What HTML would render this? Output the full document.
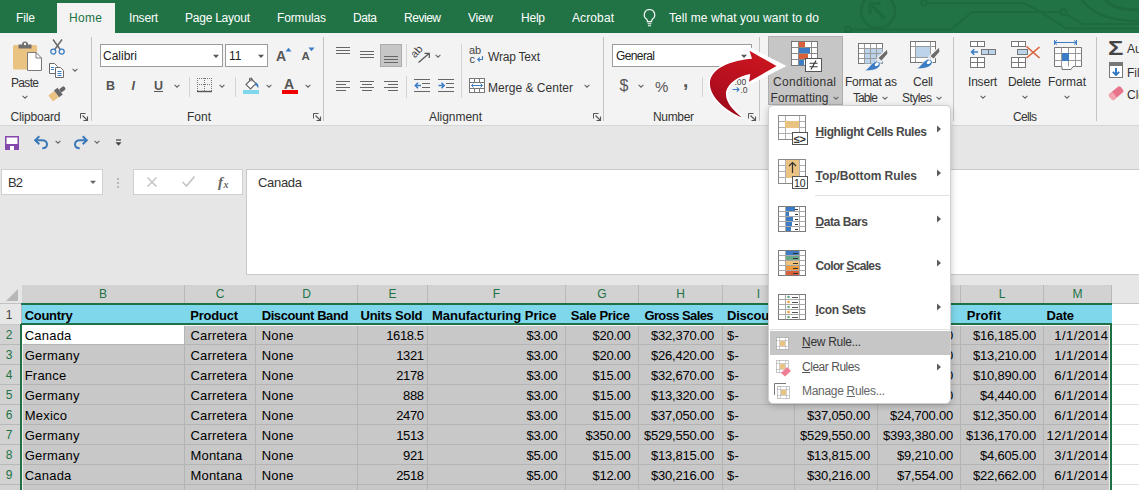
<!DOCTYPE html>
<html lang="en"><head><meta charset="utf-8"><title>Excel Conditional Formatting</title>
<style>
html,body{margin:0;padding:0}
body{width:1139px;height:490px;overflow:hidden;position:relative;background:#e6e6e6;font-family:"Liberation Sans",sans-serif;}
.t{position:absolute;white-space:pre;line-height:1;display:block}
.b{position:absolute;box-sizing:border-box;display:block}
.c{position:absolute;box-sizing:border-box;white-space:pre;overflow:hidden;font-size:13px;line-height:19px;height:19px;color:#000;letter-spacing:.22px}
.r{text-align:right}
.h{font-weight:bold;letter-spacing:0}
</style></head>
<body>
<!-- tab bar -->
<div class="b" style="left:0px;top:0px;width:1139px;height:33px;background:#217346;"></div>
<div class="b" style="left:57px;top:3px;width:58px;height:31px;background:#f3f3f3;"></div>
<span class="t" style="left:16.0px;top:11.8px;font-size:12px;color:#fff;letter-spacing:-0.11px;">File</span>
<span class="t" style="left:69.0px;top:11.8px;font-size:12px;color:#217346;letter-spacing:0.33px;">Home</span>
<span class="t" style="left:129.0px;top:11.8px;font-size:12px;color:#fff;letter-spacing:-0.20px;">Insert</span>
<span class="t" style="left:185.0px;top:11.8px;font-size:12px;color:#fff;letter-spacing:-0.24px;">Page Layout</span>
<span class="t" style="left:277.0px;top:11.8px;font-size:12px;color:#fff;letter-spacing:-0.14px;">Formulas</span>
<span class="t" style="left:353.0px;top:11.8px;font-size:12px;color:#fff;letter-spacing:-0.45px;">Data</span>
<span class="t" style="left:404.0px;top:11.8px;font-size:12px;color:#fff;letter-spacing:-0.47px;">Review</span>
<span class="t" style="left:468.0px;top:11.8px;font-size:12px;color:#fff;letter-spacing:-0.26px;">View</span>
<span class="t" style="left:521.0px;top:11.8px;font-size:12px;color:#fff;letter-spacing:-0.23px;">Help</span>
<span class="t" style="left:572.0px;top:11.8px;font-size:12px;color:#fff;letter-spacing:0.11px;">Acrobat</span>
<span class="t" style="left:669.0px;top:11.8px;font-size:12px;color:#fff;letter-spacing:0.07px;">Tell me what you want to do</span>
<svg class="b" style="left:641px;top:8px;" width="17" height="20" viewBox="0 0 17 20"><path d="M8.5 1.5a5.3 5.3 0 0 0-3 9.6c.6.5.9 1.2.9 2v.6h4.2v-.6c0-.8.3-1.5.9-2a5.3 5.3 0 0 0-3-9.6z" fill="none" stroke="#fff" stroke-width="1.2"/><path d="M6.6 15.8h3.8M7 17.8h3" stroke="#fff" stroke-width="1.1"/></svg>
<svg class="b" style="left:820px;top:0px;" width="319" height="33" viewBox="0 0 319 33"><g fill="none" stroke="#1d6a3f" stroke-width="2.2" stroke-linecap="round"><circle cx="58" cy="11" r="17" stroke-width="2.600"/><path d="M50 3.500 L64 18 M50 3.500 v9.500 M50 3.500 h9.500" stroke-width="3.200"/><circle cx="104" cy="3" r="2.800"/><path d="M107 3 H204 L221 12"/><circle cx="28" cy="29.500" r="2.800"/><path d="M31 29.500 H131 L152 12 H240"/><circle cx="243.500" cy="12" r="2.800"/><path d="M221 12 L246 28.500 H319"/><path d="M246 14 L262 24 H319" /><path d="M262 0 C 272 14 292 21 319 21" stroke-width="2.600"/><path d="M286 0 C 292 7 304 10 319 10" stroke-width="3"/></g></svg>
<!-- ribbon -->
<div class="b" style="left:0px;top:33px;width:1139px;height:92px;background:#f3f3f3;"></div>
<div class="b" style="left:0px;top:125px;width:1139px;height:1px;background:#d6d6d6;"></div>
<div class="b" style="left:91px;top:37px;width:1px;height:84px;background:#c4c4c4;"></div>
<div class="b" style="left:323px;top:37px;width:1px;height:84px;background:#c4c4c4;"></div>
<div class="b" style="left:603px;top:37px;width:1px;height:84px;background:#c4c4c4;"></div>
<div class="b" style="left:759px;top:37px;width:1px;height:84px;background:#c4c4c4;"></div>
<div class="b" style="left:953px;top:37px;width:1px;height:84px;background:#c4c4c4;"></div>
<div class="b" style="left:1096px;top:37px;width:1px;height:84px;background:#c4c4c4;"></div>
<span class="t" style="left:10.5px;top:110.8px;font-size:12px;color:#333;letter-spacing:-0.17px;">Clipboard</span>
<span class="t" style="left:187.0px;top:110.8px;font-size:12px;color:#333;">Font</span>
<span class="t" style="left:429.0px;top:110.8px;font-size:12px;color:#333;letter-spacing:-0.05px;">Alignment</span>
<span class="t" style="left:653.0px;top:110.8px;font-size:12px;color:#333;letter-spacing:-0.34px;">Number</span>
<span class="t" style="left:1013.0px;top:110.8px;font-size:12px;color:#333;letter-spacing:-0.67px;">Cells</span>
<svg class="b" style="left:80px;top:113px;" width="9" height="9" viewBox="0 0 9 9"><path d="M0.500 5.500 V0.500 H5.500" fill="none" stroke="#555" stroke-width="1"/><path d="M2.500 2.500 L7 7 M7.500 3.500 V7.500 H3.500" fill="none" stroke="#555" stroke-width="1.100"/></svg>
<svg class="b" style="left:313px;top:113px;" width="9" height="9" viewBox="0 0 9 9"><path d="M0.500 5.500 V0.500 H5.500" fill="none" stroke="#555" stroke-width="1"/><path d="M2.500 2.500 L7 7 M7.500 3.500 V7.500 H3.500" fill="none" stroke="#555" stroke-width="1.100"/></svg>
<svg class="b" style="left:593px;top:113px;" width="9" height="9" viewBox="0 0 9 9"><path d="M0.500 5.500 V0.500 H5.500" fill="none" stroke="#555" stroke-width="1"/><path d="M2.500 2.500 L7 7 M7.500 3.500 V7.500 H3.500" fill="none" stroke="#555" stroke-width="1.100"/></svg>
<svg class="b" style="left:748px;top:113px;" width="9" height="9" viewBox="0 0 9 9"><path d="M0.500 5.500 V0.500 H5.500" fill="none" stroke="#555" stroke-width="1"/><path d="M2.500 2.500 L7 7 M7.500 3.500 V7.500 H3.500" fill="none" stroke="#555" stroke-width="1.100"/></svg>
<svg class="b" style="left:12px;top:40px;" width="31" height="32" viewBox="0 0 31 32"><rect x="1" y="5" width="24" height="24.500" rx="1.5" fill="#eac282"/><path d="M6.500 8.500 V4.500 H10 a3 3 0 0 1 6 0 H19.500 V8.500 Z" fill="#6e6e6e"/><circle cx="13" cy="4" r="1.200" fill="#f3f3f3"/><path d="M15.500 12.500 H24 L29.500 18 V30.500 H15.500 Z" fill="#fff" stroke="#7a7a7a" stroke-width="1"/><path d="M24 12.500 V18 H29.500" fill="none" stroke="#7a7a7a" stroke-width="1"/></svg>
<span class="t" style="left:11.0px;top:76.5px;font-size:12px;color:#333;letter-spacing:-0.67px;">Paste</span>
<svg class="b" style="left:21px;top:94px;" width="8" height="6" viewBox="0 0 8 6"><path d="M1.6 1.8 L4 4.2 L6.4 1.8" fill="none" stroke="#666" stroke-width="1.1"/></svg>
<svg class="b" style="left:49px;top:38px;" width="17" height="18" viewBox="0 0 17 18"><path d="M4 1.5 L11.6 12 M13 1.5 L5.4 12" stroke="#666" stroke-width="1.4" fill="none"/><circle cx="4.3" cy="13.6" r="2.5" fill="none" stroke="#3b7cc4" stroke-width="1.3"/><circle cx="12.7" cy="13.6" r="2.5" fill="none" stroke="#3b7cc4" stroke-width="1.3"/></svg>
<svg class="b" style="left:48px;top:62px;" width="18" height="17" viewBox="0 0 18 17"><path d="M1.5 1.5 H6.5 L9.5 4.5 V11.5 H1.5 Z" fill="#fff" stroke="#6a6a6a"/><path d="M7.5 5.5 H12.5 L15.5 8.5 V15.5 H7.5 Z" fill="#fff" stroke="#6a6a6a"/><path d="M3 5.5h3M3 7.5h3M9.5 9.5h4M9.5 11.5h4M9.5 13.5h4" stroke="#3b7cc4" stroke-width="1"/></svg>
<svg class="b" style="left:71px;top:67px;" width="8" height="6" viewBox="0 0 8 6"><path d="M1.6 1.8 L4 4.2 L6.4 1.8" fill="none" stroke="#666" stroke-width="1.1"/></svg>
<svg class="b" style="left:48px;top:83px;" width="20" height="19" viewBox="0 0 20 19"><g transform="rotate(-38 10 9.500)"><rect x="0.500" y="6" width="7.500" height="7.500" fill="#eac282"/><rect x="8" y="5.500" width="4.500" height="8.500" fill="#666"/><rect x="12.500" y="7.700" width="6" height="4" rx="1.500" fill="#666"/></g></svg>
<div class="b" style="left:100px;top:44px;width:123px;height:23px;background:#fff;border:1px solid #9c9c9c;"></div><span class="t" style="left:103.0px;top:49.8px;font-size:12px;color:#222;">Calibri</span><svg class="b" style="left:211.5px;top:54px;" width="8" height="5" viewBox="0 0 8 5"><path d="M1 0.8 H7 L4 4 Z" fill="#555"/></svg>
<div class="b" style="left:225px;top:44px;width:43px;height:23px;background:#fff;border:1px solid #9c9c9c;"></div><span class="t" style="left:229.0px;top:49.8px;font-size:12px;color:#222;">11</span><svg class="b" style="left:256.5px;top:54px;" width="8" height="5" viewBox="0 0 8 5"><path d="M1 0.8 H7 L4 4 Z" fill="#555"/></svg>
<span class="t" style="left:276.0px;top:49.1px;font-size:14px;color:#555;font-weight:bold;">A</span>
<svg class="b" style="left:285px;top:47px;" width="8" height="5" viewBox="0 0 8 5"><path d="M0.5 4.5 H6.5 L3.5 0.8 Z" fill="#3b7cc4"/></svg>
<span class="t" style="left:301.5px;top:51.3px;font-size:11.5px;color:#555;font-weight:bold;">A</span>
<svg class="b" style="left:308px;top:47px;" width="8" height="5" viewBox="0 0 8 5"><path d="M0.5 0.5 H6.5 L3.5 4.2 Z" fill="#3b7cc4"/></svg>
<span class="t" style="left:106.0px;top:80.1px;font-size:12.5px;color:#555;font-weight:bold;">B</span>
<span class="t" style="left:131.5px;top:80.1px;font-size:12.5px;color:#555;font-style:italic;font-weight:bold;">I</span>
<span class="t" style="left:154.0px;top:80.1px;font-size:12.5px;color:#555;font-weight:bold;">U</span>
<div class="b" style="left:154px;top:91px;width:9px;height:1px;background:#555;"></div>
<svg class="b" style="left:173px;top:83px;" width="8" height="6" viewBox="0 0 8 6"><path d="M1.6 1.8 L4 4.2 L6.4 1.8" fill="none" stroke="#666" stroke-width="1.1"/></svg>
<div class="b" style="left:189px;top:77px;width:1px;height:20px;background:#d4d4d4;"></div>
<svg class="b" style="left:197px;top:78px;" width="15" height="15" viewBox="0 0 15 15"><g stroke="#777" stroke-width="1" stroke-dasharray="1 1" fill="none"><path d="M0 0.500 H15 M0 6.500 H15 M0.500 0 V13 M7.500 0 V13 M14.500 0 V13"/></g><path d="M0 13.500 H15" stroke="#555" stroke-width="1.400"/></svg>
<svg class="b" style="left:218px;top:83px;" width="8" height="6" viewBox="0 0 8 6"><path d="M1.6 1.8 L4 4.2 L6.4 1.8" fill="none" stroke="#666" stroke-width="1.1"/></svg>
<div class="b" style="left:235px;top:77px;width:1px;height:20px;background:#d4d4d4;"></div>
<svg class="b" style="left:242px;top:77px;" width="19" height="18" viewBox="0 0 19 18"><rect x="1" y="13" width="16" height="4" fill="#7fd7ec"/><path d="M4 7.5 L9.5 2 L14 6.5 L8.5 12 Z" fill="#fff" stroke="#666" stroke-width="1.1"/><path d="M7.5 4 V1.2 H10 V4.5" fill="none" stroke="#666" stroke-width="1"/><path d="M14.2 5.5 C16.5 7 17 9.5 16 11.5 C15.5 9.5 14.5 8.3 12.8 8 Z" fill="#3b7cc4"/></svg>
<svg class="b" style="left:265px;top:83px;" width="8" height="6" viewBox="0 0 8 6"><path d="M1.6 1.8 L4 4.2 L6.4 1.8" fill="none" stroke="#666" stroke-width="1.1"/></svg>
<span class="t" style="left:284.0px;top:77.3px;font-size:14px;color:#555;font-weight:bold;">A</span>
<div class="b" style="left:282px;top:90px;width:16px;height:4px;background:#f00000;"></div>
<svg class="b" style="left:304px;top:83px;" width="8" height="6" viewBox="0 0 8 6"><path d="M1.6 1.8 L4 4.2 L6.4 1.8" fill="none" stroke="#666" stroke-width="1.1"/></svg>
<div class="b" style="left:336px;top:47px;width:14px;height:1px;background:#666;"></div><div class="b" style="left:336px;top:50px;width:14px;height:1px;background:#666;"></div><div class="b" style="left:336px;top:53px;width:14px;height:1px;background:#666;"></div>
<div class="b" style="left:360px;top:51px;width:14px;height:1px;background:#666;"></div><div class="b" style="left:360px;top:54px;width:14px;height:1px;background:#666;"></div><div class="b" style="left:360px;top:57px;width:14px;height:1px;background:#666;"></div>
<div class="b" style="left:380px;top:44px;width:22px;height:23px;background:#c6c6c6;border:1px solid #ababab;"></div>
<div class="b" style="left:384px;top:56px;width:14px;height:1px;background:#666;"></div><div class="b" style="left:384px;top:59px;width:14px;height:1px;background:#666;"></div><div class="b" style="left:384px;top:62px;width:14px;height:1px;background:#666;"></div>
<div class="b" style="left:336px;top:81px;width:14px;height:1px;background:#666;"></div><div class="b" style="left:336px;top:84px;width:10px;height:1px;background:#666;"></div><div class="b" style="left:336px;top:87px;width:14px;height:1px;background:#666;"></div><div class="b" style="left:336px;top:90px;width:10px;height:1px;background:#666;"></div>
<div class="b" style="left:360.0px;top:81px;width:14px;height:1px;background:#666;"></div><div class="b" style="left:362.0px;top:84px;width:10px;height:1px;background:#666;"></div><div class="b" style="left:360.0px;top:87px;width:14px;height:1px;background:#666;"></div><div class="b" style="left:362.0px;top:90px;width:10px;height:1px;background:#666;"></div>
<div class="b" style="left:384px;top:81px;width:14px;height:1px;background:#666;"></div><div class="b" style="left:388px;top:84px;width:10px;height:1px;background:#666;"></div><div class="b" style="left:384px;top:87px;width:14px;height:1px;background:#666;"></div><div class="b" style="left:388px;top:90px;width:10px;height:1px;background:#666;"></div>
<div class="b" style="left:406px;top:44px;width:1px;height:23px;background:#d4d4d4;"></div>
<div class="b" style="left:406px;top:76px;width:1px;height:22px;background:#d4d4d4;"></div>
<div class="b" style="left:461px;top:44px;width:1px;height:54px;background:#d4d4d4;"></div>
<svg class="b" style="left:412px;top:44px;" width="21" height="21" viewBox="0 0 21 21"><text x="0" y="0" font-size="11" fill="#444" font-family="Liberation Sans" transform="translate(3.500 9.500) rotate(-48) translate(-4 3)">ab</text><path d="M6.500 18.500 L17 9.500 M17.300 14 V9.300 H12.500" fill="none" stroke="#555" stroke-width="1.200"/></svg>
<svg class="b" style="left:434px;top:53px;" width="8" height="6" viewBox="0 0 8 6"><path d="M1.6 1.8 L4 4.2 L6.4 1.8" fill="none" stroke="#666" stroke-width="1.1"/></svg>
<svg class="b" style="left:414px;top:78px;" width="17" height="15" viewBox="0 0 17 15"><path d="M0 1.5h16M8 5.5h8M8 9.5h8M0 13.5h16" stroke="#666" stroke-width="1"/><path d="M7 7.5 H1.5 M4 4.8 L1.3 7.5 L4 10.2" stroke="#3b7cc4" stroke-width="1.5" fill="none"/></svg>
<svg class="b" style="left:438px;top:78px;" width="17" height="15" viewBox="0 0 17 15"><path d="M0 1.5h16M8 5.5h8M8 9.5h8M0 13.5h16" stroke="#666" stroke-width="1"/><path d="M0.5 7.5 H6 M3.5 4.8 L6.2 7.5 L3.5 10.2" stroke="#3b7cc4" stroke-width="1.5" fill="none"/></svg>
<svg class="b" style="left:469px;top:45px;" width="17" height="19" viewBox="0 0 17 19"><text x="0" y="9" font-size="11" fill="#444" font-family="Liberation Sans">ab</text><text x="0.500" y="17.500" font-size="11" fill="#444" font-family="Liberation Sans">c</text><path d="M13.500 11 V14.500 H9 M10.800 12.500 L8.800 14.500 L10.800 16.500" stroke="#3b7cc4" stroke-width="1.100" fill="none"/></svg>
<span class="t" style="left:488.0px;top:50.5px;font-size:12px;color:#333;letter-spacing:-0.20px;">Wrap Text</span>
<svg class="b" style="left:469px;top:78px;" width="16" height="16" viewBox="0 0 16 16"><rect x="0.500" y="0.500" width="15" height="14" fill="#fff" stroke="#777"/><path d="M0.500 4.500h15M0.500 10.500h15M5.500 0.500v4M10.500 0.500v4M5.500 10.500v4M10.500 10.500v4" stroke="#777"/><path d="M2.500 7.500 H13.500 M4.500 5.500 L2.500 7.500 L4.500 9.500 M11.500 5.500 L13.500 7.500 L11.500 9.500" stroke="#3b7cc4" fill="none" stroke-width="1"/></svg>
<span class="t" style="left:488.0px;top:81.5px;font-size:12px;color:#333;letter-spacing:0.02px;">Merge &amp; Center</span>
<svg class="b" style="left:583px;top:83px;" width="8" height="6" viewBox="0 0 8 6"><path d="M1.6 1.8 L4 4.2 L6.4 1.8" fill="none" stroke="#666" stroke-width="1.1"/></svg>
<div class="b" style="left:612px;top:44px;width:140px;height:23px;background:#fff;border:1px solid #9c9c9c;"></div>
<span class="t" style="left:616.0px;top:49.8px;font-size:12px;color:#222;letter-spacing:-0.62px;">General</span>
<svg class="b" style="left:740px;top:54px;" width="8" height="5" viewBox="0 0 8 5"><path d="M1 0.8 H7 L4 4 Z" fill="#555"/></svg>
<span class="t" style="left:619.5px;top:77.7px;font-size:16px;color:#555;">$</span>
<svg class="b" style="left:637px;top:83px;" width="8" height="6" viewBox="0 0 8 6"><path d="M1.6 1.8 L4 4.2 L6.4 1.8" fill="none" stroke="#666" stroke-width="1.1"/></svg>
<span class="t" style="left:655.0px;top:79.0px;font-size:15px;color:#555;">%</span>
<span class="t" style="left:683.0px;top:70.6px;font-size:19px;color:#555;font-weight:bold;">,</span>
<div class="b" style="left:702px;top:77px;width:1px;height:20px;background:#d4d4d4;"></div>
<svg class="b" style="left:732px;top:77px;" width="18" height="18" viewBox="0 0 18 18"><text x="2.500" y="7.500" font-size="8.500" fill="#444" font-family="Liberation Sans">.00</text><text x="8.500" y="16" font-size="8.500" fill="#444" font-family="Liberation Sans">.0</text><path d="M0.5 12.5 H7 M4.8 10.3 L7 12.5 L4.8 14.7" stroke="#3b7cc4" fill="none" stroke-width="1.1"/></svg>
<div class="b" style="left:768px;top:36px;width:75px;height:69px;background:#c6c6c6;border:1px solid #aeaeae;"></div>
<svg class="b" style="left:790px;top:40px;" width="34" height="34" viewBox="0 0 34 34"><rect x="1.5" y="1.5" width="26" height="24" fill="#fff" stroke="#777"/><path d="M1.5 7.5h26M1.5 13.5h26M1.5 19.5h26M8.5 1.5v24M21.5 1.5v24" stroke="#8a8a8a"/><rect x="9" y="2" width="6" height="5" fill="#d9603b"/><rect x="9" y="8" width="11" height="5" fill="#3b7cc4"/><rect x="9" y="14" width="9" height="5" fill="#d9603b"/><rect x="9" y="20" width="5" height="5" fill="#3b7cc4"/><rect x="15.5" y="18.5" width="16" height="13" fill="#fff" stroke="#555"/><path d="M19.5 23.2h8M19.5 26.8h8M26 20.5 L21 29.5" stroke="#333" stroke-width="1.1"/></svg>
<span class="t" style="left:773.0px;top:75.5px;font-size:12px;color:#333;letter-spacing:0.30px;">Conditional</span>
<span class="t" style="left:770.5px;top:91.5px;font-size:12px;color:#333;letter-spacing:0.07px;">Formatting</span>
<svg class="b" style="left:832px;top:94.5px;" width="8" height="6" viewBox="0 0 8 6"><path d="M1.6 1.8 L4 4.2 L6.4 1.8" fill="none" stroke="#666" stroke-width="1.1"/></svg>
<svg class="b" style="left:857px;top:41px;" width="33" height="31" viewBox="0 0 33 31"><rect x="1.500" y="2.500" width="24" height="20" fill="#fff" stroke="#777"/><rect x="7.500" y="7.500" width="18" height="15" fill="#bcd3ec"/><path d="M2 7.500h23M2 12.500h23M2 17.500h23M7.500 3v19M13.500 3v19M19.500 3v19" stroke="#9a9a9a"/><g transform="translate(0 0)"><path d="M30.500 7.500 L31 13 L24.500 20.500 L20.500 17 Z" fill="#6a6a6a" stroke="#f3f3f3" stroke-width="1.200"/><path d="M19.300 18.200 L23.200 21.700" stroke="#f3f3f3" stroke-width="1.400"/><path d="M7 29.800 C12 28 13.500 22 18.500 20.300 C22.500 19.300 24.500 22.800 22.300 25.800 C19.500 29.300 13 30 7 29.800 Z" fill="#3b7cc4" stroke="#f3f3f3" stroke-width="0.800"/><ellipse cx="19.800" cy="23.200" rx="2.300" ry="1.500" fill="#fff" transform="rotate(-35 19.800 23.200)"/></g></svg>
<span class="t" style="left:845.0px;top:75.5px;font-size:12px;color:#333;letter-spacing:-0.25px;">Format as</span>
<span class="t" style="left:853.0px;top:91.5px;font-size:12px;color:#333;letter-spacing:-0.92px;">Table</span>
<svg class="b" style="left:881px;top:95px;" width="8" height="6" viewBox="0 0 8 6"><path d="M1.6 1.8 L4 4.2 L6.4 1.8" fill="none" stroke="#666" stroke-width="1.1"/></svg>
<svg class="b" style="left:909px;top:41px;" width="33" height="31" viewBox="0 0 33 31"><rect x="1.500" y="0.500" width="25" height="21" fill="#fff" stroke="#777"/><path d="M2 5.500h24M2 16.500h24M6.500 1v20M21.500 1v20" stroke="#9a9a9a"/><rect x="7" y="6" width="14" height="10" fill="#bcd3ec"/><g transform="translate(0 -2)"><path d="M30.500 7.500 L31 13 L24.500 20.500 L20.500 17 Z" fill="#6a6a6a" stroke="#f3f3f3" stroke-width="1.200"/><path d="M19.300 18.200 L23.200 21.700" stroke="#f3f3f3" stroke-width="1.400"/><path d="M7 29.800 C12 28 13.500 22 18.500 20.300 C22.500 19.300 24.500 22.800 22.300 25.800 C19.500 29.300 13 30 7 29.800 Z" fill="#3b7cc4" stroke="#f3f3f3" stroke-width="0.800"/><ellipse cx="19.800" cy="23.200" rx="2.300" ry="1.500" fill="#fff" transform="rotate(-35 19.800 23.200)"/></g></svg>
<span class="t" style="left:913.0px;top:75.5px;font-size:12px;color:#333;letter-spacing:-0.22px;">Cell</span>
<span class="t" style="left:902.0px;top:91.5px;font-size:12px;color:#333;letter-spacing:-0.54px;">Styles</span>
<svg class="b" style="left:935px;top:95px;" width="8" height="6" viewBox="0 0 8 6"><path d="M1.6 1.8 L4 4.2 L6.4 1.8" fill="none" stroke="#666" stroke-width="1.1"/></svg>
<svg class="b" style="left:969px;top:40px;" width="29" height="29" viewBox="0 0 29 29"><g fill="#fff" stroke="#777"><rect x="1.5" y="1.5" width="14" height="5"/><rect x="1.5" y="17.5" width="14" height="10"/></g><path d="M8.5 1.5v5M8.5 17.5v10M1.5 22.5h14" stroke="#777"/><rect x="12.500" y="9.5" width="14" height="5" fill="#bcd3ec" stroke="#777"/><path d="M19.5 9.5v5" stroke="#777"/><path d="M9 12 H2.5 M5.3 9.2 L2.5 12 L5.3 14.800" stroke="#3b7cc4" stroke-width="1.5" fill="none"/></svg>
<span class="t" style="left:968.0px;top:75.5px;font-size:12px;color:#333;letter-spacing:-0.20px;">Insert</span>
<svg class="b" style="left:979px;top:94px;" width="8" height="6" viewBox="0 0 8 6"><path d="M1.6 1.8 L4 4.2 L6.4 1.8" fill="none" stroke="#666" stroke-width="1.1"/></svg>
<svg class="b" style="left:1010px;top:40px;" width="32" height="29" viewBox="0 0 32 29"><g fill="#fff" stroke="#777"><rect x="1.5" y="1.5" width="14" height="5"/><rect x="1.5" y="17.5" width="14" height="10"/></g><path d="M8.5 1.5v5M8.5 17.5v10M1.5 22.5h14" stroke="#777"/><rect x="7.5" y="9.5" width="10" height="5" fill="#bcd3ec" stroke="#777"/><path d="M16.5 6.5 L29.5 18 M29.500 7 L16.5 18" stroke="#d9603b" stroke-width="1.6" fill="none"/></svg>
<span class="t" style="left:1008.0px;top:75.5px;font-size:12px;color:#333;letter-spacing:-0.34px;">Delete</span>
<svg class="b" style="left:1021px;top:94px;" width="8" height="6" viewBox="0 0 8 6"><path d="M1.6 1.8 L4 4.2 L6.4 1.8" fill="none" stroke="#666" stroke-width="1.1"/></svg>
<svg class="b" style="left:1052px;top:38px;" width="31" height="33" viewBox="0 0 31 33"><path d="M2.5 4.500h22M2.500 2v5M24.5 2v5M5 2.300 L2.700 4.500 L5 6.700M22 2.300 L24.300 4.500 L22 6.700" stroke="#3b7cc4" fill="none" stroke-width="1"/><path d="M2.500 9.500 H29.500 V28.500 H21 L19 31.500 H10 V28.500 H2.500 Z" fill="#fff" stroke="#777"/><path d="M2.5 15.500h27M2.500 22.500h27M9.500 9.500v19M16.500 9.500v19M23.500 9.500v19" stroke="#9a9a9a"/><rect x="10" y="15" width="7" height="8" fill="#3b7cc4"/></svg>
<span class="t" style="left:1048.0px;top:75.5px;font-size:12px;color:#333;">Format</span>
<svg class="b" style="left:1063px;top:94px;" width="8" height="6" viewBox="0 0 8 6"><path d="M1.6 1.8 L4 4.2 L6.4 1.8" fill="none" stroke="#666" stroke-width="1.1"/></svg>
<span class="t" style="left:1107.5px;top:37.4px;font-size:21px;color:#444;font-weight:bold;transform:scaleX(1.22);transform-origin:0 0;">Σ</span>
<span class="t" style="left:1127.0px;top:42.5px;font-size:12px;color:#333;">AutoSum</span>
<svg class="b" style="left:1109px;top:62px;" width="15" height="17" viewBox="0 0 15 17"><rect x="0.5" y="0.5" width="13" height="15" fill="#fff" stroke="#777"/><rect x="0.500" y="0.500" width="13" height="3.500" fill="#777"/><path d="M7 6 V13 M3.800 9.800 L7 13 L10.200 9.800" stroke="#2f75bd" stroke-width="1.900" fill="none"/></svg>
<span class="t" style="left:1127.0px;top:66.5px;font-size:12px;color:#333;">Fill</span>
<svg class="b" style="left:1107px;top:84px;" width="18" height="18" viewBox="0 0 18 18"><g transform="rotate(-40 9 9)"><rect x="1.500" y="5.500" width="15" height="7.500" rx="2" fill="#e8748b"/><rect x="1.500" y="5.500" width="5.500" height="7.500" rx="2" fill="#f3a3b2"/></g></svg>
<span class="t" style="left:1127.0px;top:88.5px;font-size:12px;color:#333;">Clear</span>
<!-- quick access toolbar -->
<svg class="b" style="left:5px;top:136px;" width="14" height="14" viewBox="0 0 14 14"><rect x="0.750" y="0.750" width="12.500" height="12.500" fill="#fdfdfd" stroke="#8347ad" stroke-width="1.500"/><rect x="0.750" y="8" width="12.500" height="5.250" fill="#8347ad"/><rect x="5" y="10" width="4" height="4" fill="#fdfdfd"/></svg>
<svg class="b" style="left:33px;top:135px;" width="17" height="16" viewBox="0 0 17 16"><path d="M2.500 5.200 H9 C12 5.200 14 7 14 9.300 C14 11.800 12 13.300 9.300 13.300" fill="none" stroke="#3a78b8" stroke-width="2"/><path d="M6.300 1.200 L2.200 5.200 L6.300 9.200" fill="none" stroke="#3a78b8" stroke-width="2"/></svg>
<svg class="b" style="left:54px;top:139px;" width="8" height="6" viewBox="0 0 8 6"><path d="M1.6 1.8 L4 4.2 L6.4 1.8" fill="none" stroke="#666" stroke-width="1.1"/></svg>
<svg class="b" style="left:72px;top:135px;" width="17" height="16" viewBox="0 0 17 16"><path d="M14.500 5.200 H8 C5 5.200 3 7 3 9.300 C3 11.800 5 13.300 7.700 13.300" fill="none" stroke="#3a78b8" stroke-width="2"/><path d="M10.700 1.200 L14.800 5.200 L10.700 9.200" fill="none" stroke="#3a78b8" stroke-width="2"/></svg>
<svg class="b" style="left:93px;top:139px;" width="8" height="6" viewBox="0 0 8 6"><path d="M1.6 1.8 L4 4.2 L6.4 1.8" fill="none" stroke="#666" stroke-width="1.1"/></svg>
<svg class="b" style="left:115px;top:138px;" width="8" height="9" viewBox="0 0 8 9"><path d="M1 2 H6" stroke="#444" stroke-width="1.200"/><path d="M0.500 4.200 H6.500 L3.500 7.700 Z" fill="#444"/></svg>
<!-- formula bar -->
<div class="b" style="left:1px;top:169px;width:102px;height:26px;background:#fff;border:1px solid #d0d0d0;"></div>
<span class="t" style="left:8.0px;top:176.0px;font-size:13px;color:#333;letter-spacing:-0.90px;">B2</span>
<svg class="b" style="left:88.5px;top:179.5px;" width="8" height="5" viewBox="0 0 8 5"><path d="M1 0.8 H7 L4 4 Z" fill="#666"/></svg>
<div class="b" style="left:117px;top:178px;width:2px;height:2px;background:#b8b8b8;"></div>
<div class="b" style="left:117px;top:182px;width:2px;height:2px;background:#b8b8b8;"></div>
<div class="b" style="left:117px;top:186px;width:2px;height:2px;background:#b8b8b8;"></div>
<div class="b" style="left:133px;top:169px;width:110px;height:26px;background:#fff;border:1px solid #d0d0d0;"></div>
<svg class="b" style="left:146px;top:176px;" width="12" height="12" viewBox="0 0 12 12"><path d="M1.500 1.500 L10.500 10.500 M10.500 1.500 L1.500 10.500" stroke="#c4c4c4" stroke-width="1.500"/></svg>
<svg class="b" style="left:181px;top:175px;" width="15" height="13" viewBox="0 0 15 13"><path d="M1.500 7 L5.500 11 L13.500 1.500" stroke="#c4c4c4" stroke-width="1.700" fill="none"/></svg>
<span class="t" style="left:218.0px;top:174.8px;font-size:15px;color:#666;font-family:'Liberation Serif',serif;font-style:italic;font-weight:bold;">f</span>
<span class="t" style="left:223.5px;top:179.5px;font-size:10px;color:#666;font-family:'Liberation Serif',serif;font-style:italic;font-weight:bold;">x</span>
<div class="b" style="left:246px;top:169px;width:893px;height:106px;background:#fff;border:1px solid #c9c9c9;border-right:0;"></div>
<span class="t" style="left:258.0px;top:176.0px;font-size:13px;color:#333;letter-spacing:-0.31px;">Canada</span>
<!-- worksheet grid -->
<div class="b" style="left:1112px;top:304px;width:27px;height:186px;background:#fff;"></div>
<div class="b" style="left:1112px;top:324px;width:27px;height:1px;background:#e1e1e1;"></div>
<div class="b" style="left:1112px;top:344px;width:27px;height:1px;background:#e1e1e1;"></div>
<div class="b" style="left:1112px;top:364px;width:27px;height:1px;background:#e1e1e1;"></div>
<div class="b" style="left:1112px;top:384px;width:27px;height:1px;background:#e1e1e1;"></div>
<div class="b" style="left:1112px;top:404px;width:27px;height:1px;background:#e1e1e1;"></div>
<div class="b" style="left:1112px;top:424px;width:27px;height:1px;background:#e1e1e1;"></div>
<div class="b" style="left:1112px;top:444px;width:27px;height:1px;background:#e1e1e1;"></div>
<div class="b" style="left:1112px;top:464px;width:27px;height:1px;background:#e1e1e1;"></div>
<div class="b" style="left:1112px;top:484px;width:27px;height:1px;background:#e1e1e1;"></div>
<div class="b" style="left:0px;top:285px;width:1139px;height:19px;background:#e6e6e6;"></div>
<div class="b" style="left:22px;top:285px;width:1090px;height:19px;background:#d2d2d2;"></div>
<div class="b" style="left:0px;top:303px;width:1139px;height:1px;background:#c2c2c2;"></div>
<div class="b" style="left:184px;top:285px;width:1px;height:19px;background:#b9b9b9;"></div>
<span class="t" style="left:99.0px;top:288.3px;font-size:12px;color:#217346;">B</span>
<div class="b" style="left:255px;top:285px;width:1px;height:19px;background:#b9b9b9;"></div>
<span class="t" style="left:215.7px;top:288.3px;font-size:12px;color:#217346;">C</span>
<div class="b" style="left:357px;top:285px;width:1px;height:19px;background:#b9b9b9;"></div>
<span class="t" style="left:302.2px;top:288.3px;font-size:12px;color:#217346;">D</span>
<div class="b" style="left:427px;top:285px;width:1px;height:19px;background:#b9b9b9;"></div>
<span class="t" style="left:388.5px;top:288.3px;font-size:12px;color:#217346;">E</span>
<div class="b" style="left:565px;top:285px;width:1px;height:19px;background:#b9b9b9;"></div>
<span class="t" style="left:492.8px;top:288.3px;font-size:12px;color:#217346;">F</span>
<div class="b" style="left:638px;top:285px;width:1px;height:19px;background:#b9b9b9;"></div>
<span class="t" style="left:597.3px;top:288.3px;font-size:12px;color:#217346;">G</span>
<div class="b" style="left:722px;top:285px;width:1px;height:19px;background:#b9b9b9;"></div>
<span class="t" style="left:676.2px;top:288.3px;font-size:12px;color:#217346;">H</span>
<div class="b" style="left:794px;top:285px;width:1px;height:19px;background:#b9b9b9;"></div>
<span class="t" style="left:756.8px;top:288.3px;font-size:12px;color:#217346;">I</span>
<div class="b" style="left:877px;top:285px;width:1px;height:19px;background:#b9b9b9;"></div>
<span class="t" style="left:833.0px;top:288.3px;font-size:12px;color:#217346;">J</span>
<div class="b" style="left:960px;top:285px;width:1px;height:19px;background:#b9b9b9;"></div>
<span class="t" style="left:915.0px;top:288.3px;font-size:12px;color:#217346;">K</span>
<div class="b" style="left:1043px;top:285px;width:1px;height:19px;background:#b9b9b9;"></div>
<span class="t" style="left:998.7px;top:288.3px;font-size:12px;color:#217346;">L</span>
<div class="b" style="left:1111px;top:285px;width:1px;height:19px;background:#b9b9b9;"></div>
<span class="t" style="left:1072.5px;top:288.3px;font-size:12px;color:#217346;">M</span>
<svg class="b" style="left:4px;top:287px;" width="16" height="16" viewBox="0 0 16 16"><path d="M14 2 V14 H2 Z" fill="#b7b7b7"/></svg>
<div class="b" style="left:0px;top:305px;width:21px;height:20px;background:#e6e6e6;"></div>
<div class="b" style="left:0px;top:325px;width:21px;height:165px;background:#d2d2d2;"></div>
<div class="b" style="left:0px;top:324px;width:21px;height:1px;background:#c8c8c8;"></div>
<span class="t" style="left:5.7px;top:309.3px;font-size:12px;color:#444;">1</span>
<div class="b" style="left:0px;top:344px;width:21px;height:1px;background:#b9b9b9;"></div>
<span class="t" style="left:5.7px;top:329.3px;font-size:12px;color:#217346;">2</span>
<div class="b" style="left:0px;top:364px;width:21px;height:1px;background:#b9b9b9;"></div>
<span class="t" style="left:5.7px;top:349.3px;font-size:12px;color:#217346;">3</span>
<div class="b" style="left:0px;top:384px;width:21px;height:1px;background:#b9b9b9;"></div>
<span class="t" style="left:5.7px;top:369.3px;font-size:12px;color:#217346;">4</span>
<div class="b" style="left:0px;top:404px;width:21px;height:1px;background:#b9b9b9;"></div>
<span class="t" style="left:5.7px;top:389.3px;font-size:12px;color:#217346;">5</span>
<div class="b" style="left:0px;top:424px;width:21px;height:1px;background:#b9b9b9;"></div>
<span class="t" style="left:5.7px;top:409.3px;font-size:12px;color:#217346;">6</span>
<div class="b" style="left:0px;top:444px;width:21px;height:1px;background:#b9b9b9;"></div>
<span class="t" style="left:5.7px;top:429.3px;font-size:12px;color:#217346;">7</span>
<div class="b" style="left:0px;top:464px;width:21px;height:1px;background:#b9b9b9;"></div>
<span class="t" style="left:5.7px;top:449.3px;font-size:12px;color:#217346;">8</span>
<div class="b" style="left:0px;top:484px;width:21px;height:1px;background:#b9b9b9;"></div>
<span class="t" style="left:5.7px;top:469.3px;font-size:12px;color:#217346;">9</span>
<div class="b" style="left:0px;top:504px;width:21px;height:1px;background:#b9b9b9;"></div>
<div class="b" style="left:21px;top:305px;width:1px;height:185px;background:#b9b9b9;"></div>
<div class="b" style="left:22px;top:305px;width:1090px;height:20px;background:#7fd7ec;"></div>
<div class="b" style="left:22px;top:325px;width:1090px;height:165px;background:#c8c8c8;"></div>
<div class="b" style="left:22px;top:325px;width:162px;height:19px;background:#fff;"></div>
<div class="b" style="left:22px;top:344px;width:1090px;height:1px;background:#b4b4b4;"></div>
<div class="b" style="left:22px;top:364px;width:1090px;height:1px;background:#b4b4b4;"></div>
<div class="b" style="left:22px;top:384px;width:1090px;height:1px;background:#b4b4b4;"></div>
<div class="b" style="left:22px;top:404px;width:1090px;height:1px;background:#b4b4b4;"></div>
<div class="b" style="left:22px;top:424px;width:1090px;height:1px;background:#b4b4b4;"></div>
<div class="b" style="left:22px;top:444px;width:1090px;height:1px;background:#b4b4b4;"></div>
<div class="b" style="left:22px;top:464px;width:1090px;height:1px;background:#b4b4b4;"></div>
<div class="b" style="left:22px;top:484px;width:1090px;height:1px;background:#b4b4b4;"></div>
<div class="b" style="left:22px;top:504px;width:1090px;height:1px;background:#b4b4b4;"></div>
<div class="b" style="left:184px;top:325px;width:1px;height:165px;background:#b4b4b4;"></div>
<div class="b" style="left:255px;top:325px;width:1px;height:165px;background:#b4b4b4;"></div>
<div class="b" style="left:357px;top:325px;width:1px;height:165px;background:#b4b4b4;"></div>
<div class="b" style="left:427px;top:325px;width:1px;height:165px;background:#b4b4b4;"></div>
<div class="b" style="left:565px;top:325px;width:1px;height:165px;background:#b4b4b4;"></div>
<div class="b" style="left:638px;top:325px;width:1px;height:165px;background:#b4b4b4;"></div>
<div class="b" style="left:722px;top:325px;width:1px;height:165px;background:#b4b4b4;"></div>
<div class="b" style="left:794px;top:325px;width:1px;height:165px;background:#b4b4b4;"></div>
<div class="b" style="left:877px;top:325px;width:1px;height:165px;background:#b4b4b4;"></div>
<div class="b" style="left:960px;top:325px;width:1px;height:165px;background:#b4b4b4;"></div>
<div class="b" style="left:1043px;top:325px;width:1px;height:165px;background:#b4b4b4;"></div>
<span class="t" style="left:24.7px;top:309.0px;font-size:13px;color:#000;letter-spacing:-0.30px;font-weight:bold;">Country</span>
<span class="t" style="left:190.3px;top:309.0px;font-size:13px;color:#000;letter-spacing:-0.24px;font-weight:bold;">Product</span>
<span class="t" style="left:261.7px;top:309.0px;font-size:13px;color:#000;letter-spacing:-0.42px;font-weight:bold;">Discount Band</span>
<span class="t" style="left:360.5px;top:309.0px;font-size:13px;color:#000;letter-spacing:-0.25px;font-weight:bold;">Units Sold</span>
<span class="t" style="left:432.0px;top:309.0px;font-size:13px;color:#000;letter-spacing:-0.03px;font-weight:bold;">Manufacturing Price</span>
<span class="t" style="left:570.8px;top:309.0px;font-size:13px;color:#000;letter-spacing:-0.33px;font-weight:bold;">Sale Price</span>
<span class="t" style="left:644.4px;top:309.0px;font-size:13px;color:#000;letter-spacing:-0.60px;font-weight:bold;">Gross Sales</span>
<span class="t" style="left:727.0px;top:309.0px;font-size:13px;color:#000;font-weight:bold;letter-spacing:-0.25px;">Discounts</span>
<span class="t" style="left:800.0px;top:309.0px;font-size:13px;color:#000;font-weight:bold;letter-spacing:-0.25px;">Sales</span>
<span class="t" style="left:883.0px;top:309.0px;font-size:13px;color:#000;font-weight:bold;letter-spacing:-0.25px;">COGS</span>
<span class="t" style="left:966.7px;top:309.0px;font-size:13px;color:#000;letter-spacing:0.07px;font-weight:bold;">Profit</span>
<span class="t" style="left:1046.5px;top:309.0px;font-size:13px;color:#000;letter-spacing:-0.23px;font-weight:bold;">Date</span>
<div class="c" style="left:22px;top:326px;width:162px;padding-left:2.7px">Canada</div>
<div class="c" style="left:185px;top:326px;width:70px;padding-left:5.4px">Carretera</div>
<div class="c" style="left:256px;top:326px;width:101px;padding-left:5.7px">None</div>
<div class="c r" style="left:358px;top:326px;width:69px;padding-right:3.5px;letter-spacing:-0.43px">1618.5</div>
<div class="c r" style="left:428px;top:326px;width:137px;padding-right:7.5px;letter-spacing:-0.3px">$3.00</div>
<div class="c r" style="left:566px;top:326px;width:72px;padding-right:7.5px;letter-spacing:-0.3px">$20.00</div>
<div class="c r" style="left:639px;top:326px;width:83px;padding-right:8px;letter-spacing:-0.2px">$32,370.00</div>
<div class="c" style="left:723px;top:326px;width:71px;padding-left:4px">$-</div>
<div class="c r" style="left:795px;top:326px;width:82px;padding-right:7px;letter-spacing:-0.2px">$32,370.00</div>
<div class="c r" style="left:878px;top:326px;width:82px;padding-right:7px;letter-spacing:-0.2px">$16,185.00</div>
<div class="c r" style="left:961px;top:326px;width:82px;padding-right:7px;letter-spacing:-0.2px">$16,185.00</div>
<div class="c r" style="left:1044px;top:326px;width:67px;padding-right:2.5px;letter-spacing:0.45px">1/1/2014</div>
<div class="c" style="left:22px;top:346px;width:162px;padding-left:2.7px">Germany</div>
<div class="c" style="left:185px;top:346px;width:70px;padding-left:5.4px">Carretera</div>
<div class="c" style="left:256px;top:346px;width:101px;padding-left:5.7px">None</div>
<div class="c r" style="left:358px;top:346px;width:69px;padding-right:3.5px;letter-spacing:-0.43px">1321</div>
<div class="c r" style="left:428px;top:346px;width:137px;padding-right:7.5px;letter-spacing:-0.3px">$3.00</div>
<div class="c r" style="left:566px;top:346px;width:72px;padding-right:7.5px;letter-spacing:-0.3px">$20.00</div>
<div class="c r" style="left:639px;top:346px;width:83px;padding-right:8px;letter-spacing:-0.2px">$26,420.00</div>
<div class="c" style="left:723px;top:346px;width:71px;padding-left:4px">$-</div>
<div class="c r" style="left:795px;top:346px;width:82px;padding-right:7px;letter-spacing:-0.2px">$26,420.00</div>
<div class="c r" style="left:878px;top:346px;width:82px;padding-right:7px;letter-spacing:-0.2px">$13,210.00</div>
<div class="c r" style="left:961px;top:346px;width:82px;padding-right:7px;letter-spacing:-0.2px">$13,210.00</div>
<div class="c r" style="left:1044px;top:346px;width:67px;padding-right:2.5px;letter-spacing:0.45px">1/1/2014</div>
<div class="c" style="left:22px;top:366px;width:162px;padding-left:2.7px">France</div>
<div class="c" style="left:185px;top:366px;width:70px;padding-left:5.4px">Carretera</div>
<div class="c" style="left:256px;top:366px;width:101px;padding-left:5.7px">None</div>
<div class="c r" style="left:358px;top:366px;width:69px;padding-right:3.5px;letter-spacing:-0.43px">2178</div>
<div class="c r" style="left:428px;top:366px;width:137px;padding-right:7.5px;letter-spacing:-0.3px">$3.00</div>
<div class="c r" style="left:566px;top:366px;width:72px;padding-right:7.5px;letter-spacing:-0.3px">$15.00</div>
<div class="c r" style="left:639px;top:366px;width:83px;padding-right:8px;letter-spacing:-0.2px">$32,670.00</div>
<div class="c" style="left:723px;top:366px;width:71px;padding-left:4px">$-</div>
<div class="c r" style="left:795px;top:366px;width:82px;padding-right:7px;letter-spacing:-0.2px">$32,670.00</div>
<div class="c r" style="left:878px;top:366px;width:82px;padding-right:7px;letter-spacing:-0.2px">$21,780.00</div>
<div class="c r" style="left:961px;top:366px;width:82px;padding-right:7px;letter-spacing:-0.2px">$10,890.00</div>
<div class="c r" style="left:1044px;top:366px;width:67px;padding-right:2.5px;letter-spacing:0.45px">6/1/2014</div>
<div class="c" style="left:22px;top:386px;width:162px;padding-left:2.7px">Germany</div>
<div class="c" style="left:185px;top:386px;width:70px;padding-left:5.4px">Carretera</div>
<div class="c" style="left:256px;top:386px;width:101px;padding-left:5.7px">None</div>
<div class="c r" style="left:358px;top:386px;width:69px;padding-right:3.5px;letter-spacing:-0.43px">888</div>
<div class="c r" style="left:428px;top:386px;width:137px;padding-right:7.5px;letter-spacing:-0.3px">$3.00</div>
<div class="c r" style="left:566px;top:386px;width:72px;padding-right:7.5px;letter-spacing:-0.3px">$15.00</div>
<div class="c r" style="left:639px;top:386px;width:83px;padding-right:8px;letter-spacing:-0.2px">$13,320.00</div>
<div class="c" style="left:723px;top:386px;width:71px;padding-left:4px">$-</div>
<div class="c r" style="left:795px;top:386px;width:82px;padding-right:7px;letter-spacing:-0.2px">$13,320.00</div>
<div class="c r" style="left:878px;top:386px;width:82px;padding-right:7px;letter-spacing:-0.2px">$8,880.00</div>
<div class="c r" style="left:961px;top:386px;width:82px;padding-right:7px;letter-spacing:-0.2px">$4,440.00</div>
<div class="c r" style="left:1044px;top:386px;width:67px;padding-right:2.5px;letter-spacing:0.45px">6/1/2014</div>
<div class="c" style="left:22px;top:406px;width:162px;padding-left:2.7px">Mexico</div>
<div class="c" style="left:185px;top:406px;width:70px;padding-left:5.4px">Carretera</div>
<div class="c" style="left:256px;top:406px;width:101px;padding-left:5.7px">None</div>
<div class="c r" style="left:358px;top:406px;width:69px;padding-right:3.5px;letter-spacing:-0.43px">2470</div>
<div class="c r" style="left:428px;top:406px;width:137px;padding-right:7.5px;letter-spacing:-0.3px">$3.00</div>
<div class="c r" style="left:566px;top:406px;width:72px;padding-right:7.5px;letter-spacing:-0.3px">$15.00</div>
<div class="c r" style="left:639px;top:406px;width:83px;padding-right:8px;letter-spacing:-0.2px">$37,050.00</div>
<div class="c" style="left:723px;top:406px;width:71px;padding-left:4px">$-</div>
<div class="c r" style="left:795px;top:406px;width:82px;padding-right:7px;letter-spacing:-0.2px">$37,050.00</div>
<div class="c r" style="left:878px;top:406px;width:82px;padding-right:7px;letter-spacing:-0.2px">$24,700.00</div>
<div class="c r" style="left:961px;top:406px;width:82px;padding-right:7px;letter-spacing:-0.2px">$12,350.00</div>
<div class="c r" style="left:1044px;top:406px;width:67px;padding-right:2.5px;letter-spacing:0.45px">6/1/2014</div>
<div class="c" style="left:22px;top:426px;width:162px;padding-left:2.7px">Germany</div>
<div class="c" style="left:185px;top:426px;width:70px;padding-left:5.4px">Carretera</div>
<div class="c" style="left:256px;top:426px;width:101px;padding-left:5.7px">None</div>
<div class="c r" style="left:358px;top:426px;width:69px;padding-right:3.5px;letter-spacing:-0.43px">1513</div>
<div class="c r" style="left:428px;top:426px;width:137px;padding-right:7.5px;letter-spacing:-0.3px">$3.00</div>
<div class="c r" style="left:566px;top:426px;width:72px;padding-right:7.5px;letter-spacing:-0.3px">$350.00</div>
<div class="c r" style="left:639px;top:426px;width:83px;padding-right:8px;letter-spacing:-0.2px">$529,550.00</div>
<div class="c" style="left:723px;top:426px;width:71px;padding-left:4px">$-</div>
<div class="c r" style="left:795px;top:426px;width:82px;padding-right:7px;letter-spacing:-0.2px">$529,550.00</div>
<div class="c r" style="left:878px;top:426px;width:82px;padding-right:7px;letter-spacing:-0.2px">$393,380.00</div>
<div class="c r" style="left:961px;top:426px;width:82px;padding-right:7px;letter-spacing:-0.2px">$136,170.00</div>
<div class="c r" style="left:1044px;top:426px;width:67px;padding-right:2.5px;letter-spacing:0.45px">12/1/2014</div>
<div class="c" style="left:22px;top:446px;width:162px;padding-left:2.7px">Germany</div>
<div class="c" style="left:185px;top:446px;width:70px;padding-left:5.4px">Montana</div>
<div class="c" style="left:256px;top:446px;width:101px;padding-left:5.7px">None</div>
<div class="c r" style="left:358px;top:446px;width:69px;padding-right:3.5px;letter-spacing:-0.43px">921</div>
<div class="c r" style="left:428px;top:446px;width:137px;padding-right:7.5px;letter-spacing:-0.3px">$5.00</div>
<div class="c r" style="left:566px;top:446px;width:72px;padding-right:7.5px;letter-spacing:-0.3px">$15.00</div>
<div class="c r" style="left:639px;top:446px;width:83px;padding-right:8px;letter-spacing:-0.2px">$13,815.00</div>
<div class="c" style="left:723px;top:446px;width:71px;padding-left:4px">$-</div>
<div class="c r" style="left:795px;top:446px;width:82px;padding-right:7px;letter-spacing:-0.2px">$13,815.00</div>
<div class="c r" style="left:878px;top:446px;width:82px;padding-right:7px;letter-spacing:-0.2px">$9,210.00</div>
<div class="c r" style="left:961px;top:446px;width:82px;padding-right:7px;letter-spacing:-0.2px">$4,605.00</div>
<div class="c r" style="left:1044px;top:446px;width:67px;padding-right:2.5px;letter-spacing:0.45px">3/1/2014</div>
<div class="c" style="left:22px;top:466px;width:162px;padding-left:2.7px">Canada</div>
<div class="c" style="left:185px;top:466px;width:70px;padding-left:5.4px">Montana</div>
<div class="c" style="left:256px;top:466px;width:101px;padding-left:5.7px">None</div>
<div class="c r" style="left:358px;top:466px;width:69px;padding-right:3.5px;letter-spacing:-0.43px">2518</div>
<div class="c r" style="left:428px;top:466px;width:137px;padding-right:7.5px;letter-spacing:-0.3px">$5.00</div>
<div class="c r" style="left:566px;top:466px;width:72px;padding-right:7.5px;letter-spacing:-0.3px">$12.00</div>
<div class="c r" style="left:639px;top:466px;width:83px;padding-right:8px;letter-spacing:-0.2px">$30,216.00</div>
<div class="c" style="left:723px;top:466px;width:71px;padding-left:4px">$-</div>
<div class="c r" style="left:795px;top:466px;width:82px;padding-right:7px;letter-spacing:-0.2px">$30,216.00</div>
<div class="c r" style="left:878px;top:466px;width:82px;padding-right:7px;letter-spacing:-0.2px">$7,554.00</div>
<div class="c r" style="left:961px;top:466px;width:82px;padding-right:7px;letter-spacing:-0.2px">$22,662.00</div>
<div class="c r" style="left:1044px;top:466px;width:67px;padding-right:2.5px;letter-spacing:0.45px">6/1/2014</div>
<div class="c" style="left:22px;top:486px;width:162px;padding-left:2.7px">Canada</div>
<div class="c" style="left:185px;top:486px;width:70px;padding-left:5.4px">Montana</div>
<div class="c" style="left:256px;top:486px;width:101px;padding-left:5.7px">None</div>
<div class="c r" style="left:358px;top:486px;width:69px;padding-right:3.5px;letter-spacing:-0.43px">292</div>
<div class="c r" style="left:428px;top:486px;width:137px;padding-right:7.5px;letter-spacing:-0.3px">$5.00</div>
<div class="c r" style="left:566px;top:486px;width:72px;padding-right:7.5px;letter-spacing:-0.3px">$20.00</div>
<div class="c r" style="left:639px;top:486px;width:83px;padding-right:8px;letter-spacing:-0.2px">$5,840.00</div>
<div class="c" style="left:723px;top:486px;width:71px;padding-left:4px">$-</div>
<div class="c r" style="left:795px;top:486px;width:82px;padding-right:7px;letter-spacing:-0.2px">$5,840.00</div>
<div class="c r" style="left:878px;top:486px;width:82px;padding-right:7px;letter-spacing:-0.2px">$2,920.00</div>
<div class="c r" style="left:961px;top:486px;width:82px;padding-right:7px;letter-spacing:-0.2px">$2,920.00</div>
<div class="c r" style="left:1044px;top:486px;width:67px;padding-right:2.5px;letter-spacing:0.45px">2/1/2014</div>
<div class="b" style="left:22px;top:325px;width:1088px;height:1px;background:rgba(255,255,255,.85);"></div>
<div class="b" style="left:22px;top:325px;width:1px;height:165px;background:rgba(255,255,255,.7);"></div>
<div class="b" style="left:1109px;top:325px;width:1px;height:165px;background:rgba(255,255,255,.7);"></div>
<div class="b" style="left:21px;top:303px;width:1091px;height:2px;background:#1e7145;"></div>
<div class="b" style="left:21px;top:323px;width:1091px;height:2px;background:#1e7145;"></div>
<div class="b" style="left:20px;top:324px;width:2px;height:166px;background:#1e7145;"></div>
<div class="b" style="left:1110px;top:324px;width:2px;height:166px;background:#1e7145;"></div>
<!-- conditional formatting menu -->
<div class="b" style="left:768px;top:105px;width:183px;height:299px;background:#fff;border:1px solid #cfcfcf;border-radius:5px;box-shadow:0 2px 7px rgba(0,0,0,.22);"></div>
<svg class="b" style="left:778px;top:115px;" width="31" height="30" viewBox="0 0 31 30"><rect x="0.500" y="0.500" width="27" height="24" fill="#fff" stroke="#8a8a8a"/><path d="M1 6.500h26M1 12.500h26M1 18.500h26M7.500 1v23M21.500 1v23" stroke="#b0b0b0"/><rect x="7" y="6" width="14" height="7" fill="#eac282"/><rect x="14.500" y="17.500" width="15" height="12" fill="#fff" stroke="#555"/><text x="15.500" y="27.500" font-size="11" font-weight="bold" font-family="Liberation Sans" fill="#333">≤&gt;</text></svg>
<span class="t" style="left:815.5px;top:125.8px;font-size:12px;color:#4a4a4a;letter-spacing:-0.43px;font-weight:bold;"><u>H</u>ighlight Cells Rules</span>
<svg class="b" style="left:936px;top:125px;" width="6" height="8" viewBox="0 0 6 8"><path d="M1 0.500 L5 4 L1 7.500 Z" fill="#5a5a5a"/></svg>
<svg class="b" style="left:778px;top:159px;" width="31" height="30" viewBox="0 0 31 30"><rect x="0.500" y="0.500" width="27" height="24" fill="#fff" stroke="#8a8a8a"/><path d="M1 6.500h26M1 12.500h26M1 18.500h26M7.500 1v23M14.500 1v23M21.500 1v23" stroke="#b0b0b0"/><rect x="8" y="1" width="13" height="18" fill="#eac282"/><path d="M14.500 14 V3.500 M11 7 L14.500 3.500 L18 7" stroke="#333" fill="none" stroke-width="1.200"/><rect x="14.500" y="17.500" width="15" height="12" fill="#fff" stroke="#555"/><text x="16" y="27.700" font-size="10.500" font-family="Liberation Sans" fill="#222">10</text></svg>
<span class="t" style="left:815.5px;top:169.8px;font-size:12px;color:#4a4a4a;letter-spacing:-0.06px;font-weight:bold;"><u>T</u>op/Bottom Rules</span>
<svg class="b" style="left:936px;top:169px;" width="6" height="8" viewBox="0 0 6 8"><path d="M1 0.500 L5 4 L1 7.500 Z" fill="#5a5a5a"/></svg>
<div class="b" style="left:815px;top:195px;width:136px;height:1px;background:#e1e1e1;"></div>
<svg class="b" style="left:778px;top:206px;" width="29" height="27" viewBox="0 0 29 27"><rect x="0.500" y="0.500" width="27" height="25" fill="#fff" stroke="#7a7a7a"/><path d="M0.500 5.500h27M0.500 10.500h27M0.500 15.500h27M0.500 20.500h27M7.500 0.500v25M21.500 0.500v25" stroke="#a8a8a8"/><rect x="8" y="1" width="9" height="4" fill="#3b7cc4"/><rect x="8" y="6" width="3" height="4" fill="#3b7cc4"/><rect x="8" y="11" width="7" height="4" fill="#3b7cc4"/><rect x="8" y="16" width="6" height="4" fill="#3b7cc4"/><rect x="8" y="21" width="5" height="4" fill="#3b7cc4"/><path d="M17 3.500h3M17 8.500h3M17 13.500h3M17 18.500h3M17 23.500h3" stroke="#333" stroke-width="1"/></svg>
<span class="t" style="left:815.5px;top:215.8px;font-size:12px;color:#4a4a4a;letter-spacing:-0.44px;font-weight:bold;"><u>D</u>ata Bars</span>
<svg class="b" style="left:936px;top:215px;" width="6" height="8" viewBox="0 0 6 8"><path d="M1 0.500 L5 4 L1 7.500 Z" fill="#5a5a5a"/></svg>
<svg class="b" style="left:778px;top:250px;" width="29" height="27" viewBox="0 0 29 27"><rect x="0.500" y="0.500" width="27" height="25" fill="#fff" stroke="#7a7a7a"/><path d="M0.500 5.500h27M0.500 10.500h27M0.500 15.500h27M0.500 20.500h27M7.500 0.500v25M21.500 0.500v25" stroke="#a8a8a8"/><rect x="8" y="1" width="13" height="4" fill="#3b7cc4"/><rect x="8" y="6" width="13" height="4" fill="#6aa88a"/><rect x="8" y="11" width="13" height="4" fill="#f1c27a"/><rect x="8" y="16" width="13" height="4" fill="#f09a3e"/><rect x="8" y="21" width="13" height="4" fill="#d9603b"/><path d="M15 3.500h5M15 8.500h5M15 13.500h5M15 18.500h5M15 23.500h5" stroke="#333" stroke-width="1"/></svg>
<span class="t" style="left:815.5px;top:259.8px;font-size:12px;color:#4a4a4a;letter-spacing:-0.65px;font-weight:bold;">Color <u>S</u>cales</span>
<svg class="b" style="left:936px;top:259px;" width="6" height="8" viewBox="0 0 6 8"><path d="M1 0.500 L5 4 L1 7.500 Z" fill="#5a5a5a"/></svg>
<svg class="b" style="left:778px;top:294px;" width="29" height="27" viewBox="0 0 29 27"><rect x="0.500" y="0.500" width="27" height="25" fill="#fff" stroke="#7a7a7a"/><path d="M0.500 5.500h27M0.500 10.500h27M0.500 15.500h27M0.500 20.500h27M7.500 0.500v25M21.500 0.500v25" stroke="#a8a8a8"/><g><circle cx="10.500" cy="3" r="1.300" fill="#6aa88a"/><circle cx="10.500" cy="8" r="1.300" fill="#f09a3e"/><circle cx="10.500" cy="13" r="1.300" fill="#6aa88a"/><circle cx="10.500" cy="18" r="1.300" fill="#f09a3e"/><circle cx="10.500" cy="23" r="1.300" fill="#6aa88a"/></g><path d="M14 3.500h6M14 8.500h6M14 13.500h6M14 18.500h6M14 23.500h6" stroke="#555" stroke-width="1"/></svg>
<span class="t" style="left:815.5px;top:303.8px;font-size:12px;color:#4a4a4a;letter-spacing:-0.36px;font-weight:bold;"><u>I</u>con Sets</span>
<svg class="b" style="left:936px;top:303px;" width="6" height="8" viewBox="0 0 6 8"><path d="M1 0.500 L5 4 L1 7.500 Z" fill="#5a5a5a"/></svg>
<div class="b" style="left:769px;top:329px;width:181px;height:1px;background:#e1e1e1;"></div>
<div class="b" style="left:770px;top:331px;width:180px;height:24px;background:#c6c6c6;"></div>
<svg class="b" style="left:776px;top:337px;" width="14" height="14" viewBox="0 0 14 14"><rect x="0.500" y="0.500" width="12" height="12" fill="#fff" stroke="#8c8c8c" stroke-dasharray="1 1"/><path d="M0.500 3.500h12M0.500 9.500h12M3.500 0.500v12M9.500 0.500v12" stroke="#a5a5a5" stroke-dasharray="1 1"/><rect x="4" y="4" width="5" height="5" fill="#eac282"/></svg>
<span class="t" style="left:802.0px;top:336.3px;font-size:12px;color:#333;letter-spacing:-0.30px;"><u>N</u>ew Rule...</span>
<svg class="b" style="left:776px;top:360px;" width="16" height="17" viewBox="0 0 16 17"><rect x="0.500" y="0.500" width="12" height="12" fill="#fff" stroke="#8c8c8c" stroke-dasharray="1 1"/><path d="M0.500 3.500h12M0.500 9.500h12M3.500 0.500v12M9.500 0.500v12" stroke="#a5a5a5" stroke-dasharray="1 1"/><rect x="4" y="4" width="5" height="5" fill="#eac282"/><path d="M5 13 L11 7 L15 11 L9 16.500 Z" fill="#ef7f93"/></svg>
<span class="t" style="left:802.0px;top:360.8px;font-size:12px;color:#555;letter-spacing:-0.47px;"><u>C</u>lear Rules</span>
<svg class="b" style="left:936px;top:363px;" width="6" height="8" viewBox="0 0 6 8"><path d="M1 0.500 L5 4 L1 7.500 Z" fill="#5a5a5a"/></svg>
<svg class="b" style="left:774px;top:383px;" width="17" height="17" viewBox="0 0 17 17"><path d="M0.500 12 V0.500 H12" fill="none" stroke="#7a7a7a"/><g transform="translate(3,3)"><rect x="0.500" y="0.500" width="12" height="12" fill="#fff" stroke="#8c8c8c" stroke-dasharray="1 1"/><path d="M0.500 3.500h12M0.500 9.500h12M3.500 0.500v12M9.500 0.500v12" stroke="#a5a5a5" stroke-dasharray="1 1"/><rect x="4" y="4" width="5" height="5" fill="#eac282"/></g></svg>
<span class="t" style="left:802.0px;top:384.8px;font-size:12px;color:#666;letter-spacing:-0.31px;">Manage <u>R</u>ules...</span>
<!-- pointer arrow -->
<svg class="b" style="left:700px;top:40px;" width="95" height="85" viewBox="700 40 95 85"><defs><linearGradient id="ag" x1="0.600" y1="0" x2="0.200" y2="1"><stop offset="0" stop-color="#c9151f"/><stop offset="0.550" stop-color="#b60f1e"/><stop offset="1" stop-color="#98091a"/></linearGradient></defs><path d="M747.500 46 L786.500 66 L746.500 86.500 Z" fill="#fff"/><path d="M741.700 117.300 C727 111 710 98 709.900 83.400 C710 68 733 60 752 58.800 L749.500 50.800 L776.500 66 L749 81.700 L750.300 73.900 C738 76 728 83 726 92 C725 102 733 110 741.700 117.300 Z" fill="url(#ag)" stroke="#fff" stroke-width="3.200" stroke-linejoin="round" paint-order="stroke"/></svg>
</body></html>
